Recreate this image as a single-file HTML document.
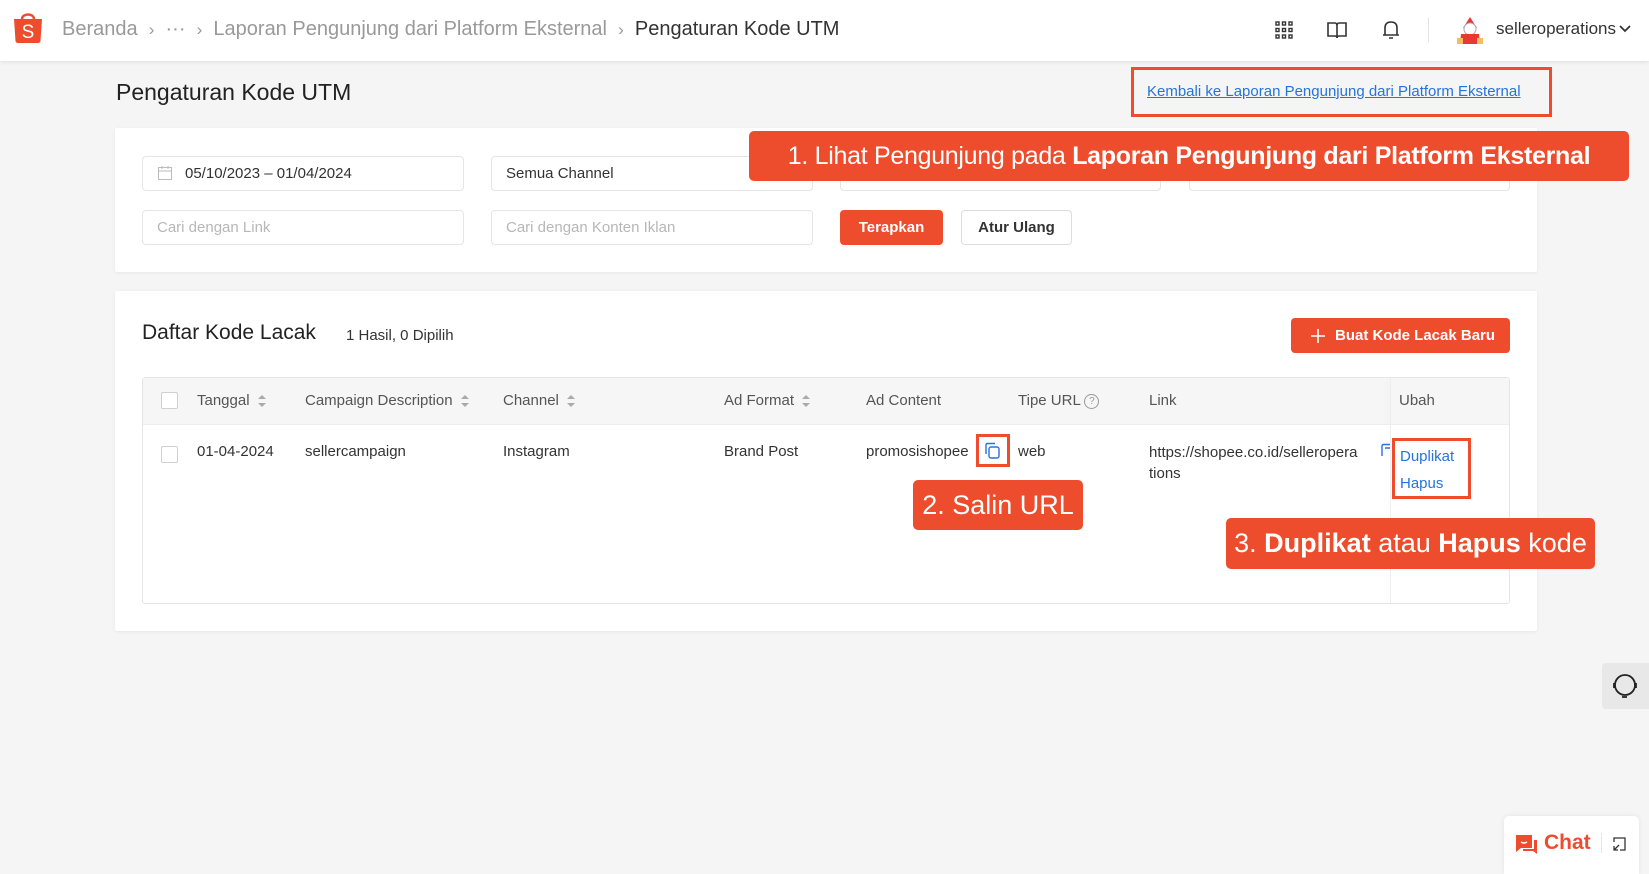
<!DOCTYPE html>
<html><head><meta charset="utf-8">
<style>
*{box-sizing:border-box;margin:0;padding:0}
body{width:1649px;height:874px;background:#f5f5f5;font-family:"Liberation Sans",Arial,sans-serif;color:#333;position:relative;overflow:hidden;font-size:15px}
.abs{position:absolute}
.hdr{left:0;top:0;width:1649px;height:61px;background:#fff;box-shadow:0 1px 4px rgba(0,0,0,.1)}
.card{background:#fff;border-radius:2px;box-shadow:0 1px 3px rgba(0,0,0,.06)}
.inp{border:1px solid #e5e5e5;border-radius:4px;height:35px;background:#fff;font-size:15px;padding-left:14px;line-height:33px}
.ph{color:#b7b7b7}
.callout{background:#ee4d2d;color:#fff;border-radius:5px;font-size:27px;white-space:nowrap;display:flex;align-items:center;justify-content:center}
.redbox{border:3px solid #ee4d2d}
.th{top:377px;height:48px;line-height:48px;color:#555;font-size:15px}
.td{top:443px;font-size:15px;color:#333}
.sort{display:inline-block;vertical-align:middle;margin-left:8px;width:8px;height:12px;position:relative}
.sort:before,.sort:after{content:"";position:absolute;left:0;border-left:4px solid transparent;border-right:4px solid transparent}
.sort:before{top:0;border-bottom:4px solid #aaa}
.sort:after{bottom:0;border-top:4px solid #aaa}
.cb{width:17px;height:17px;border:1px solid #d0d0d0;border-radius:2px;background:#fff}
</style></head><body>
<div class="abs hdr"></div>
<svg class="abs" style="left:13px;top:10px" width="30" height="33" viewBox="0 0 30 33"><path d="M9 9 C9 3 21 3 21 9" fill="none" stroke="#ee4d2d" stroke-width="2.4"/><path d="M1 9 H29 L27.5 31 Q27 33 25 33 H5 Q3 33 2.5 31 Z" fill="#ee4d2d"/><text x="15" y="28" fill="#fff" font-size="19" text-anchor="middle" font-family="Liberation Sans">S</text></svg>
<div class="abs" style="left:62px;top:18px;font-size:20px;color:#999;white-space:nowrap">Beranda &nbsp;<span style="font-size:17px">›</span>&nbsp; ··· &nbsp;<span style="font-size:17px">›</span>&nbsp; Laporan Pengunjung dari Platform Eksternal &nbsp;<span style="font-size:17px">›</span>&nbsp; <span style="color:#333">Pengaturan Kode UTM</span></div>
<svg class="abs" style="left:1274px;top:20px" width="20" height="20" viewBox="0 0 20 20" fill="none" stroke="#333" stroke-width="1.4"><rect x="2" y="2" width="3" height="3"/><rect x="8.5" y="2" width="3" height="3"/><rect x="15" y="2" width="3" height="3"/><rect x="2" y="8.5" width="3" height="3"/><rect x="8.5" y="8.5" width="3" height="3"/><rect x="15" y="8.5" width="3" height="3"/><rect x="2" y="15" width="3" height="3"/><rect x="8.5" y="15" width="3" height="3"/><rect x="15" y="15" width="3" height="3"/></svg>
<svg class="abs" style="left:1326px;top:19px" width="22" height="22" viewBox="0 0 22 22" fill="none" stroke="#333" stroke-width="1.6"><path d="M2 4 H9 Q11 4 11 7 V19 Q11 17 9 17 H2 Z M20 4 H13 Q11 4 11 7 V19 Q11 17 13 17 H20 Z"/></svg>
<svg class="abs" style="left:1381px;top:19px" width="20" height="22" viewBox="0 0 20 22" fill="none" stroke="#333" stroke-width="1.6"><path d="M4 16 V9 Q4 3 10 3 Q16 3 16 9 V16 H18 H2 Z M8 19 H12"/></svg>
<div class="abs" style="left:1428px;top:18px;width:1px;height:24px;background:#e5e5e5"></div>
<svg class="abs" style="left:1455px;top:14px" width="30" height="32" viewBox="0 0 30 32"><path d="M8 14 L15 3 L22 14 Z" fill="#e53935"/><circle cx="15" cy="15" r="6" fill="#fff" stroke="#aaa"/><path d="M6 20 H24 L25 30 H5 Z" fill="#e53935"/><rect x="2" y="24" width="6" height="6" fill="#f0c060"/><rect x="22" y="24" width="6" height="6" fill="#f0c060"/></svg>
<div class="abs" style="left:1496px;top:19px;font-size:17px;color:#333">selleroperations</div>
<svg class="abs" style="left:1618px;top:24px" width="14" height="10" viewBox="0 0 14 10"><path d="M2 2 L7 7 L12 2" fill="none" stroke="#333" stroke-width="1.8"/></svg>

<div class="abs" style="left:116px;top:79px;font-size:23px;color:#222">Pengaturan Kode UTM</div>
<div class="abs redbox" style="left:1131px;top:67px;width:421px;height:50px;"></div>
<div class="abs" style="left:1147px;top:83px;font-size:15px;color:#2673dd;text-decoration:underline">Kembali ke Laporan Pengunjung dari Platform Eksternal</div>

<div class="abs card" style="left:115px;top:128px;width:1422px;height:144px"></div>
<div class="abs inp" style="left:142px;top:156px;width:322px;padding-left:42px">05/10/2023 – 01/04/2024</div>
<svg class="abs" style="left:157px;top:165px" width="16" height="16" viewBox="0 0 16 16" fill="none" stroke="#bbb"><rect x="1.5" y="2.5" width="13" height="12"/><path d="M1.5 6 H14.5 M5 1 V4 M11 1 V4"/></svg>
<div class="abs inp" style="left:491px;top:156px;width:322px">Semua Channel</div>
<div class="abs inp" style="left:840px;top:156px;width:321px"></div>
<div class="abs inp" style="left:1189px;top:156px;width:321px"></div>
<div class="abs inp ph" style="left:142px;top:210px;width:322px">Cari dengan Link</div>
<div class="abs inp ph" style="left:491px;top:210px;width:322px">Cari dengan Konten Iklan</div>
<div class="abs" style="left:840px;top:210px;width:103px;height:35px;background:#ee4d2d;border-radius:4px;color:#fff;font-weight:bold;text-align:center;line-height:35px;font-size:15px">Terapkan</div>
<div class="abs" style="left:961px;top:210px;width:111px;height:35px;border:1px solid #ddd;border-radius:4px;background:#fff;color:#333;font-weight:bold;text-align:center;line-height:33px;font-size:15px">Atur Ulang</div>
<div class="abs callout" style="left:749px;top:131px;width:880px;height:50px;font-size:25px;letter-spacing:-0.3px">1. Lihat Pengunjung pada&nbsp;<b>Laporan Pengunjung dari Platform Eksternal</b></div>

<div class="abs card" style="left:115px;top:291px;width:1422px;height:340px"></div>
<div class="abs" style="left:142px;top:321px;font-size:21px;color:#222">Daftar Kode Lacak</div>
<div class="abs" style="left:346px;top:327px;font-size:15px;color:#333">1 Hasil, 0 Dipilih</div>
<div class="abs" style="left:1291px;top:318px;width:219px;height:35px;background:#ee4d2d;border-radius:4px;color:#fff;font-weight:bold;line-height:35px;font-size:15px;padding-left:44px">Buat Kode Lacak Baru</div>
<svg class="abs" style="left:1310px;top:328px" width="16" height="16" viewBox="0 0 16 16"><path d="M8 1 V15 M1 8 H15" stroke="#fff" stroke-width="1.6"/></svg>

<div class="abs" style="left:142px;top:377px;width:1368px;height:227px;border:1px solid #e5e5e5;border-radius:3px;background:#fff"></div>
<div class="abs" style="left:143px;top:378px;width:1366px;height:47px;background:#f6f6f6;border-bottom:1px solid #eee"></div>
<div class="abs" style="left:1390px;top:378px;width:1px;height:225px;box-shadow:-3px 0 5px rgba(0,0,0,.06);background:#eee"></div>
<div class="abs cb" style="left:161px;top:392px"></div>
<div class="abs th" style="left:197px">Tanggal<span class="sort"></span></div>
<div class="abs th" style="left:305px">Campaign Description<span class="sort"></span></div>
<div class="abs th" style="left:503px">Channel<span class="sort"></span></div>
<div class="abs th" style="left:724px">Ad Format<span class="sort"></span></div>
<div class="abs th" style="left:866px">Ad Content</div>
<div class="abs th" style="left:1018px">Tipe URL <span style="display:inline-block;width:15px;height:15px;border:1px solid #999;border-radius:50%;font-size:10px;line-height:13px;text-align:center;color:#999;vertical-align:middle">?</span></div>
<div class="abs th" style="left:1149px">Link</div>
<div class="abs th" style="left:1399px">Ubah</div>

<div class="abs cb" style="left:161px;top:446px"></div>
<div class="abs td" style="left:197px">01-04-2024</div>
<div class="abs td" style="left:305px">sellercampaign</div>
<div class="abs td" style="left:503px">Instagram</div>
<div class="abs td" style="left:724px">Brand Post</div>
<div class="abs td" style="left:866px">promosishopee</div>
<div class="abs redbox" style="left:976px;top:434px;width:34px;height:33px"></div>
<svg class="abs" style="left:984px;top:442px" width="17" height="18" viewBox="0 0 17 18" fill="none" stroke="#2673dd" stroke-width="1.4"><rect x="5" y="5" width="10" height="11" rx="2"/><path d="M2 12 V3 Q2 1.5 3.5 1.5 H11"/></svg>
<div class="abs td" style="left:1018px">web</div>
<div class="abs td" style="left:1149px;line-height:21px;top:442px">https://shopee.co.id/selleropera<br>tions</div>
<svg class="abs" style="left:1380px;top:443px" width="10" height="16" viewBox="0 0 10 16" fill="none" stroke="#2673dd" stroke-width="1.4"><path d="M2 13 V3 Q2 1.5 3.5 1.5 H10 M5 5 H10"/></svg>
<div class="abs redbox" style="left:1392px;top:438px;width:79px;height:61px"></div>
<div class="abs" style="left:1400px;top:443px;font-size:15px;color:#2673dd;line-height:27px">Duplikat<br>Hapus</div>

<div class="abs callout" style="left:913px;top:480px;width:170px;height:50px">2. Salin URL</div>
<div class="abs callout" style="left:1226px;top:518px;width:369px;height:51px">3.&nbsp;<b>Duplikat</b>&nbsp;atau&nbsp;<b>Hapus</b>&nbsp;kode</div>

<div class="abs" style="left:1602px;top:663px;width:47px;height:46px;background:#e8e8e8;border-radius:4px 0 0 4px"></div>
<svg class="abs" style="left:1610px;top:671px" width="30" height="30" viewBox="0 0 30 30" fill="none" stroke="#222" stroke-width="1.8"><circle cx="15" cy="14" r="10"/><path d="M4 12 V17 M26 12 V17 M12 26 H17"/></svg>

<div class="abs" style="left:1504px;top:816px;width:135px;height:58px;background:#fff;border-radius:5px 5px 0 0;box-shadow:0 0 6px rgba(0,0,0,.08)"></div>
<svg class="abs" style="left:1515px;top:833px" width="23" height="22" viewBox="0 0 23 22"><path d="M1 2 H17 V15 H6 L1 19 Z" fill="#ee4d2d"/><path d="M19 7 H22 V21 L18 18 H8 V16 H19 Z" fill="#ee4d2d"/><path d="M6 9 Q9 11 12 9" stroke="#fff" stroke-width="1.4" fill="none"/></svg>
<div class="abs" style="left:1544px;top:831px;font-size:21px;font-weight:bold;color:#ee4d2d">Chat</div>
<div class="abs" style="left:1601px;top:833px;width:1px;height:20px;background:#e5e5e5"></div>
<svg class="abs" style="left:1611px;top:836px" width="16" height="16" viewBox="0 0 16 16" fill="none" stroke="#333" stroke-width="1.3"><path d="M3 6 V2 H14 V14 H9 M3 14 L8 9 M3 10 V14 H7"/></svg>
</body></html>
